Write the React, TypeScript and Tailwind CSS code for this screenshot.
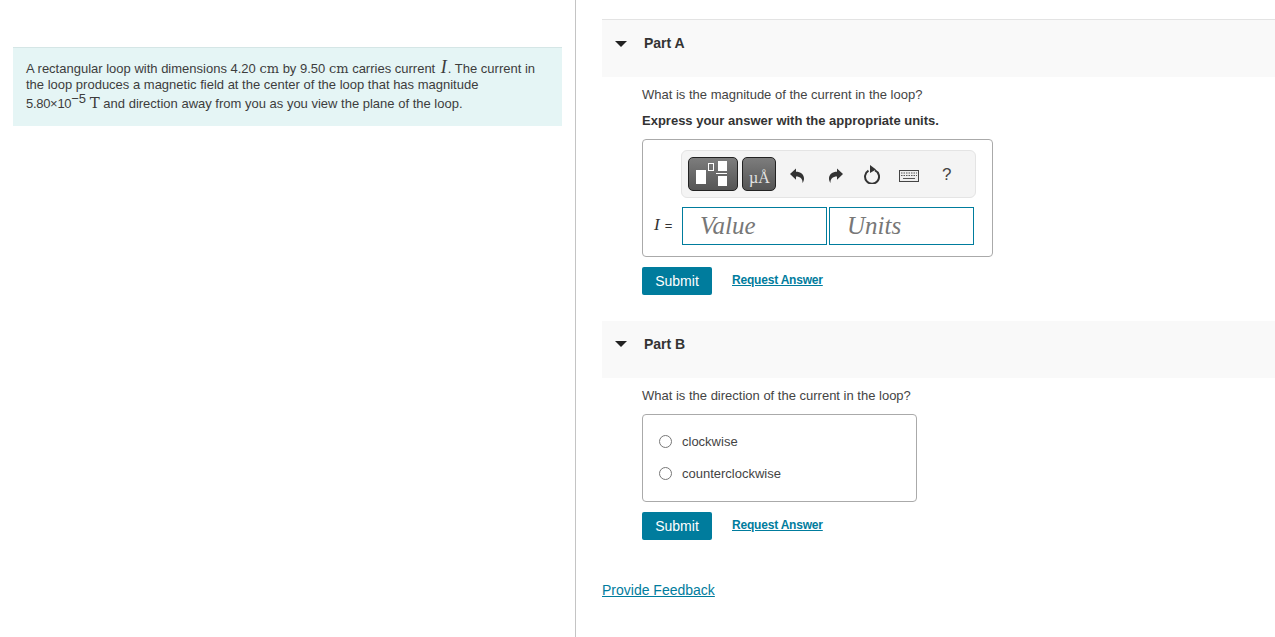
import { ReactNode } from "react";

const sans = "font-['Liberation_Sans',Arial,sans-serif]";
const serif = "font-['Liberation_Serif','Times_New_Roman',serif]";
const mathRoman = "font-['DejaVu_Serif',serif]";

function PartHeader({ label, border }: { label: string; border?: boolean }) {
  return (
    <div className={`flex items-start bg-[#f9f9f9] pl-[13px] ${border ? "h-[58px] border-t border-[#e3e3e3]" : "h-[57px]"}`}>
      <div className={`h-0 w-0 border-x-[6px] border-t-[6px] border-x-transparent border-t-[#222] ${border ? "mt-[21px]" : "mt-[20px]"}`} />
      <span className="ml-[17px] mt-[15px] text-[14px] font-bold leading-[16px] text-[#333]">{label}</span>
    </div>
  );
}

function SubmitRow() {
  return (
    <div className="flex items-start">
      <button className="flex h-[28px] w-[70px] items-center justify-center rounded-[2px] bg-[#007c9d] text-[14px] text-white">
        Submit
      </button>
      <a className="ml-[20px] mt-[6px] text-[12px] font-bold leading-[14px] tracking-[-0.2px] text-[#007c9d] underline">Request Answer</a>
    </div>
  );
}

function ToolBtn({ className, children }: { className: string; children: ReactNode }) {
  return (
    <div className={`relative h-[34px] rounded-[5px] border border-[#222] bg-gradient-to-b from-[#7d7d7d] to-[#555] ${className}`}>
      {children}
    </div>
  );
}

function Radio({ label }: { label: string }) {
  return (
    <div className="flex h-[32px] items-center">
      <span className="mt-[-1px] h-[13px] w-[13px] rounded-full border border-[#777] bg-white" />
      <span className="ml-[10px] text-[13px] text-[#444]">{label}</span>
    </div>
  );
}

export default function App() {
  return (
    <div className={`flex h-[637px] w-[1275px] overflow-hidden bg-white ${sans}`}>
      <aside className="h-full w-[576px] shrink-0 border-r border-[#c4c4c4] pl-[13px] pr-[13px] pt-[47px]">
        <div className="h-[79px] border-t border-[#d5e6e6] bg-[#e5f5f5] pl-[13px] pt-[11px] text-[13px] text-[#3d3d3d]">
          <div className="h-[17px] leading-[17px] whitespace-nowrap">
            A rectangular loop with dimensions 4.20 <span className={`${mathRoman} text-[13px]`}>cm</span> by 9.50{" "}
            <span className={`${mathRoman} text-[13px]`}>cm</span> carries current{" "}
            <span className={`${serif} ml-[2px] mr-px text-[18px] italic`}>I</span>. The current in
          </div>
          <div className="h-[18px] leading-[17px] whitespace-nowrap">the loop produces a magnetic field at the center of the loop that has magnitude</div>
          <div className="h-[18px] leading-[18px] whitespace-nowrap">
            <span className="tracking-[-0.3px]">5.80×10</span>
            <span className="relative top-[-5px] text-[13px]">−5</span>{" "}
            <span className={`${mathRoman} text-[15px]`}>T</span> and direction away from you as you view the plane of the loop.
          </div>
        </div>
      </aside>

      <main className="min-w-0 flex-1 pl-[26px] pt-[19px]">
        <PartHeader label="Part A" border />
        <div className="pl-[40px]">
          <p className="mt-[10px] text-[13px] leading-[16px] text-[#444]">What is the magnitude of the current in the loop?</p>
          <p className="mt-[10px] text-[13px] font-bold leading-[16px] text-[#333]">Express your answer with the appropriate units.</p>

          <div className="mt-[10px] h-[118px] w-[351px] rounded-[4px] border border-[#aaa] pl-[38px] pt-[10px]">
            <div className="flex h-[48px] w-[295px] items-center rounded-[6px] border border-[#e4e4e4] bg-[#f4f4f4] pl-[6px]">
              <ToolBtn className="w-[50px]">
                <div className="absolute left-[7px] top-[12px] h-[14px] w-[10px] bg-white" />
                <div className="absolute left-[19px] top-[5px] h-[8px] w-[6px] border border-white" />
                <div className="absolute left-[29px] top-[3px] h-[10px] w-[9px] bg-white" />
                <div className="absolute left-[27px] top-[15px] h-px w-[11px] bg-white" />
                <div className="absolute left-[29px] top-[18px] h-[10px] w-[9px] bg-white" />
              </ToolBtn>
              <ToolBtn className={`ml-[4px] w-[34px] ${serif}`}>
                <span className="absolute bottom-[3px] left-[6px] text-[16px] leading-[18px] text-[#e4e4e4]">µÅ</span>
              </ToolBtn>
              <svg className="ml-[14px] mt-[2px]" width="14" height="15" viewBox="0 0 14 15">
                <path d="M0 6 6 .5v3.300c4.500 0 8 2.700 8 6.700 0 1.500-.5 3.300-1.500 4.500.3-4-2-6.500-6.500-6.500v3.300z" fill="#333" />
              </svg>
              <svg className="ml-[25px] mt-[2px]" width="14" height="15" viewBox="0 0 14 15">
                <path d="M14 6 8 .5v3.300c-4.500 0-8 2.700-8 6.700 0 1.500.5 3.300 1.500 4.500-.3-4 2-6.500 6.500-6.500v3.300z" fill="#333" />
              </svg>
              <svg className="ml-[21px] mt-[1px]" width="16" height="19" viewBox="0 0 16 19">
                <path d="M4.500 5.600a7 7 0 1 0 6.500-.3" fill="none" stroke="#333" strokeWidth="2" />
                <path d="M6 0v8l6-3.500z" fill="#333" />
              </svg>
              <svg className="ml-[19px] mt-[4px]" width="20" height="12" viewBox="0 0 20 12">
                <rect x=".5" y=".5" width="19" height="11" fill="#eee" stroke="#444" />
                <path d="M2 3h16M2 5.500h16" stroke="#555" strokeDasharray="1.500 1" />
                <path d="M4 8.500h12" stroke="#555" />
              </svg>
              <span className="ml-[23px] mt-[2px] text-[17px] leading-[16px] text-[#444]">?</span>
            </div>
            <div className="relative mt-[9px] ml-px flex">
              <span className={`absolute left-[-28px] top-[8px] text-[13px] leading-[20px] text-[#333] ${sans}`}>
                <span className={`${serif} mr-[5px] text-[17px] italic`}>I</span>=
              </span>
              <div className={`flex h-[38px] w-[145px] items-center border border-[#007c9d] pl-[17px] text-[25px] italic text-[#777] ${serif}`}>Value</div>
              <div className={`ml-[2px] flex h-[38px] w-[145px] items-center border border-[#007c9d] pl-[17px] text-[25px] italic text-[#777] ${serif}`}>Units</div>
            </div>
          </div>

          <div className="mt-[10px]"><SubmitRow /></div>
        </div>

        <div className="mt-[26px]"><PartHeader label="Part B" /></div>
        <div className="pl-[40px]">
          <p className="mt-[10px] text-[13px] leading-[16px] text-[#444]">What is the direction of the current in the loop?</p>
          <div className="mt-[10px] h-[88px] w-[275px] rounded-[4px] border border-[#aaa] pl-[16px] pt-[11px]">
            <Radio label="clockwise" />
            <Radio label="counterclockwise" />
          </div>
          <div className="mt-[10px]"><SubmitRow /></div>
        </div>

        <a className="mt-[42px] block text-[14px] leading-[16px] text-[#007c9d] underline">Provide Feedback</a>
      </main>
    </div>
  );
}
